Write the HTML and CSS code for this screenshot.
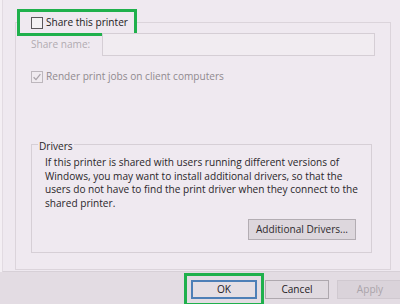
FILE: index.html
```html
<!DOCTYPE html>
<html>
<head>
<meta charset="utf-8">
<link rel="stylesheet" href="styles.css">
</head>
<body>
<div class="main">
  <fieldset class="share">
    <legend class="hl-share"><span class="cb"></span><span class="cb-label">Share this printer</span></legend>
    <div class="name-row">
      <span class="name-label">Share name:</span>
      <div class="input"></div>
    </div>
    <div class="render-row">
      <span class="cb cb-disabled"><svg width="10" height="10" viewBox="0 0 10 10"><path d="M1.6 5.2 L4 7.6 L8.4 2.2" fill="none" stroke="#aaa4aa" stroke-width="1.3"/></svg></span>
      <span class="render-label">Render print jobs on client computers</span>
    </div>
    <fieldset class="drivers">
      <legend class="drivers-legend">Drivers</legend>
      <p class="drivers-text">If this printer is shared with users running different versions of<br>Windows, you may want to install additional drivers, so that the<br>users do not have to find the print driver when they connect to the<br>shared printer.</p>
      <div class="btn-row"><button class="btn add-btn">Additional Drivers...</button></div>
    </fieldset>
  </fieldset>
</div>
<div class="footer">
  <div class="hl-ok"><button class="btn ok">OK</button></div>
  <button class="btn cancel">Cancel</button>
  <button class="btn apply">Apply</button>
</div>
</body>
</html>
```
FILE: styles.css
```css
html, body {
  margin: 0;
  padding: 0;
}
body {
  width: 400px;
  height: 304px;
  overflow: hidden;
  background: #f4eff4;
  font-family: "Open Sans", "Noto Sans", sans-serif;
  font-size: 10.1px;
  line-height: 13.4px;
  color: #2a262a;
}
.main {
  box-sizing: border-box;
  height: 272px;
  margin-left: 2px;
  border-left: 1px solid #e2dbe2;
  border-bottom: 1px solid #d7d0d7;
  background: #efe9f0;
  padding-top: 9px;
}
.share {
  box-sizing: border-box;
  margin: 0 0 0 12px;
  width: 376px;
  height: 261px;
  padding: 0;
  border: 1px solid #dbd4db;
  min-inline-size: 0;
}
.hl-share {
  box-sizing: border-box;
  width: 120px;
  height: 27px;
  margin-left: 1px;
  padding: 0 0 0 11px;
  border: 3px solid #1fb04c;
  display: flex;
  align-items: center;
  background: #efe9f0;
}
.cb {
  box-sizing: border-box;
  flex: none;
  width: 12px;
  height: 12px;
  border: 1px solid #5b575b;
  background: #f4f1f4;
  margin-right: 3px;
  display: inline-flex;
  align-items: center;
  justify-content: center;
}
.cb-label {
  color: #1e1b1e;
  white-space: nowrap;
}
.name-row {
  display: flex;
  align-items: center;
  margin-top: -3px;
  padding-left: 15px;
  height: 23px;
}
.name-label {
  width: 71px;
  color: #b1abb1;
  white-space: nowrap;
}
.input {
  box-sizing: border-box;
  width: 273px;
  height: 23px;
  border: 1px solid #d5ced5;
  background: #f1ecf1;
}
.render-row {
  display: flex;
  align-items: center;
  margin-top: 14px;
  padding-left: 15px;
  height: 13px;
}
.cb-disabled {
  border-color: #bdb7bd;
  background: #f0ebf0;
}
.render-label {
  color: #8f898f;
  white-space: nowrap;
}
.drivers {
  box-sizing: border-box;
  margin: 53px 0 0 15px;
  width: 341px;
  height: 117px;
  padding: 0;
  border: 1px solid #d6cfd6;
  min-inline-size: 0;
}
.drivers-legend {
  margin-left: 6px;
  padding: 4px 1px 0 1px;
  color: #2a262a;
}
.drivers-text {
  margin: 3px 0 0 13px;
  white-space: nowrap;
  color: #2a262a;
}
.btn-row {
  display: flex;
  justify-content: flex-end;
  padding-right: 15px;
  margin-top: 9px;
}
.btn {
  box-sizing: border-box;
  font-family: inherit;
  font-size: 10.1px;
  line-height: 13px;
  padding: 0;
  margin: 0;
  color: #252125;
  background: #e0dae0;
  border: 1px solid #aea8ae;
  border-radius: 0;
}
.add-btn {
  width: 108px;
  height: 21px;
  background: #ddd7dd;
  border-color: #b3adb3;
  color: #2e2a2e;
}
.footer {
  display: flex;
  align-items: flex-start;
  height: 32px;
  box-sizing: border-box;
  padding: 1px 0 0 184px;
  background: #e3dce3;
  overflow: hidden;
}
.hl-ok {
  flex: none;
  border: 3px solid #1fb04c;
  padding: 4px;
}
.ok {
  display: block;
  width: 66px;
  height: 19px;
  border: 2px solid #4d7fb7;
  background: #e4dee4;
}
.cancel {
  flex: none;
  width: 64px;
  height: 19px;
  margin: 7px 0 0 1px;
}
.apply {
  flex: none;
  width: 66px;
  height: 19px;
  margin: 7px 0 0 8px;
  background: #dad3da;
  border-color: #d0c9d0;
  color: #aaa4aa;
}
```
